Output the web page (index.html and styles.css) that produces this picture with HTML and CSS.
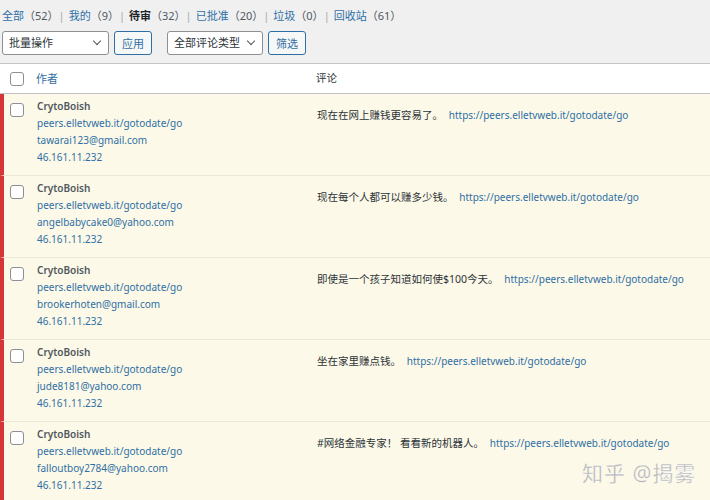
FILE: index.html
```html
<!DOCTYPE html>
<html lang="zh-CN">
<head>
    <meta charset="UTF-8">
    <title>评论</title>
    <link rel="stylesheet" href="styles.css">
</head>
<body>
    <ul class="subsubsub">
        <li><a href="#">全部</a><span class="count">（52）</span>|</li>
        <li><a href="#">我的</a><span class="count">（9）</span>|</li>
        <li><a href="#" class="current">待审</a><span class="count">（32）</span>|</li>
        <li><a href="#">已批准</a><span class="count">（20）</span>|</li>
        <li><a href="#">垃圾</a><span class="count">（0）</span>|</li>
        <li><a href="#">回收站</a><span class="count">（61）</span></li>
    </ul>

    <div class="tablenav">
        <div class="select bulk">批量操作<span class="chev"></span></div>
        <button class="button">应用</button>
        <div class="select type">全部评论类型<span class="chev"></span></div>
        <button class="button">筛选</button>
    </div>

    <div class="list">
        <div class="row head">
            <div class="cb"><span class="check"></span></div>
            <div class="author"><a href="#">作者</a></div>
            <div class="comment">评论</div>
        </div>
        <div id="rows"></div>
    </div>

    <div class="watermark">知乎 @揭雾</div>

    <script>
        const comments = [
            { email: 'tawarai123@gmail.com', text: '现在在网上赚钱更容易了。' },
            { email: 'angelbabycake0@yahoo.com', text: '现在每个人都可以赚多少钱。' },
            { email: 'brookerhoten@gmail.com', text: '即使是一个孩子知道如何使$100今天。' },
            { email: 'jude8181@yahoo.com', text: '坐在家里赚点钱。' },
            { email: 'falloutboy2784@yahoo.com', text: '#网络金融专家！ 看看新的机器人。' }
        ];

        document.getElementById('rows').innerHTML = comments.map(c => `
            <div class="row unapproved">
                <div class="cb"><span class="check"></span></div>
                <div class="author">
                    <strong>CrytoBoish</strong>
                    <a href="#">peers.elletvweb.it/gotodate/go</a>
                    <a href="#">${c.email}</a>
                    <a href="#">46.161.11.232</a>
                </div>
                <div class="comment">${c.text} <a href="#">https://peers.elletvweb.it/gotodate/go</a></div>
            </div>
        `).join('');
    </script>
</body>
</html>
```

FILE: styles.css
```css
body {
    margin: 0;
    background: #f0f0f1;
    font-family: "Noto Sans", "Noto Sans CJK SC", sans-serif;
    font-size: 10px;
    color: #3c434a;
    overflow: hidden;
    position: relative;
    height: 500px;
}
a {
    color: #2f6fa5;
    text-decoration: none;
}
.subsubsub {
    list-style: none;
    margin: 0;
    padding: 7px 0 0 2px;
    height: 24px;
    display: flex;
    gap: 4px;
    color: #a7aaad;
    font-size: 11px;
    line-height: 17px;
}
.subsubsub .count {
    color: #50575e;
}
.subsubsub .current {
    color: #1d2327;
    font-weight: bold;
}
.tablenav {
    display: flex;
    align-items: center;
    height: 24px;
    padding: 0 0 0 2px;
    margin-bottom: 8px;
    font-size: 11px;
}
.select {
    position: relative;
    box-sizing: border-box;
    height: 24px;
    line-height: 22px;
    padding: 0 8px 0 6px;
    border: 1px solid #8c8f94;
    border-radius: 3px;
    background: #fff;
    color: #2c3338;
}
.select.bulk {
    width: 107px;
}
.select.type {
    width: 96px;
    margin-left: 15px;
}
.chev {
    position: absolute;
    right: 8px;
    top: 6px;
    width: 5px;
    height: 5px;
    border-right: 1.5px solid #50575e;
    border-bottom: 1.5px solid #50575e;
    transform: rotate(45deg);
}
.button {
    height: 24px;
    margin-left: 5px;
    padding: 0 7px;
    border: 1px solid #2f6fa5;
    border-radius: 3px;
    background: #f6f7f7;
    color: #2f6fa5;
    font: inherit;
}
.list {
    border-top: 1px solid #c3c4c7;
    background: #fff;
}
.row {
    display: flex;
    height: 82px;
    box-sizing: border-box;
    border-bottom: 1px solid #ece8d4;
    line-height: 17px;
}
.row.head {
    height: 30px;
    align-items: center;
    border-bottom: 1px solid #c3c4c7;
    font-size: 11px;
}
.row.head .comment {
    padding-top: 0;
    padding-left: 0;
    color: #2c3338;
}
.row.head .author {
    padding-top: 0;
    padding-left: 12px;
}
.unapproved {
    background: #fcf9e8;
    border-left: 4px solid #d63638;
}
.unapproved .cb {
    width: 14px;
    padding: 9px 0 0 6px;
}
.head .cb {
    width: 14px;
    padding-left: 10px;
}
.check {
    display: block;
    width: 12px;
    height: 12px;
    border: 1px solid #8c8f94;
    border-radius: 3px;
    background: #fff;
}
.author {
    width: 280px;
    padding: 4px 0 0 13px;
    display: flex;
    flex-direction: column;
    align-items: flex-start;
}
.author strong {
    color: #50575e;
    font-weight: 600;
}
.comment {
    flex: 1;
    padding: 13px 0 0 0;
    color: #2c3338;
    font-size: 10.5px;
}
.comment a {
    margin-left: 3px;
    font-size: 10px;
}
.watermark {
    position: absolute;
    left: 582px;
    top: 457px;
    font-size: 21px;
    letter-spacing: 1px;
    color: #b4b4b4;
    -webkit-text-stroke: 0.3px #fff;
}
```
